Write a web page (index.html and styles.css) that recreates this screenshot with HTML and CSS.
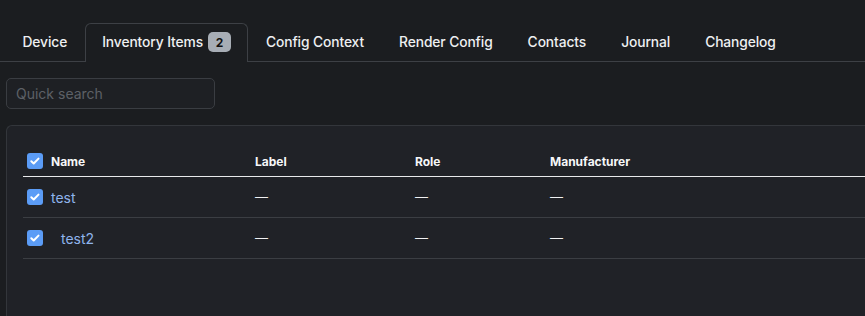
FILE: index.html
```html
<!DOCTYPE html>
<html>
<head>
<meta charset="utf-8">
<link rel="stylesheet" href="styles.css">
</head>
<body>
<div class="page">
  <ul class="tabs">
    <li class="tab">Device</li>
    <li class="tab active">Inventory Items <span class="badge">2</span></li>
    <li class="tab">Config Context</li>
    <li class="tab">Render Config</li>
    <li class="tab">Contacts</li>
    <li class="tab">Journal</li>
    <li class="tab">Changelog</li>
  </ul>
  <div class="search-row">
    <input class="search" type="text" placeholder="Quick search">
  </div>
  <div class="card">
    <table class="table">
      <thead>
        <tr>
          <th class="col-name"><span class="cell-check"><span class="check"><svg viewBox="0 0 16 16"><path d="M4.3 8.2l2.4 2.3 4.8-4.9" /></svg></span>Name</span></th>
          <th class="col-label">Label</th>
          <th class="col-role">Role</th>
          <th>Manufacturer</th>
        </tr>
      </thead>
      <tbody>
        <tr>
          <td><span class="cell-check"><span class="check"><svg viewBox="0 0 16 16"><path d="M4.3 8.2l2.4 2.3 4.8-4.9" /></svg></span><a class="link">test</a></span></td>
          <td>—</td>
          <td>—</td>
          <td>—</td>
        </tr>
        <tr>
          <td><span class="cell-check"><span class="check"><svg viewBox="0 0 16 16"><path d="M4.3 8.2l2.4 2.3 4.8-4.9" /></svg></span><a class="link indent">test2</a></span></td>
          <td>—</td>
          <td>—</td>
          <td>—</td>
        </tr>
      </tbody>
    </table>
  </div>
</div>
</body>
</html>
```
FILE: styles.css
```css
html, body {
  margin: 0;
  padding: 0;
  background: #1b1d20;
  color: #f2f3f5;
  font-family: Inter, "Noto Sans", sans-serif;
  overflow: hidden;
}
.page {
  padding-top: 23px;
}
.tabs {
  list-style: none;
  margin: 0;
  padding: 0 0 0 5px;
  display: flex;
  border-bottom: 1px solid #3d4045;
  height: 38px;
}
.tab {
  display: flex;
  align-items: center;
  gap: 5px;
  padding: 0 16.5px 1px;
  height: 38px;
  border: 1px solid transparent;
  border-bottom: none;
  border-radius: 6px 6px 0 0;
  font-size: 13.8px;
  font-weight: 500;
  color: #eef0f2;
  letter-spacing: -0.1px;
  box-sizing: border-box;
  white-space: nowrap;
}
.tab.active {
  border-color: #3d4045;
  background: #1b1d20;
  height: 39px;
  margin-bottom: -1px;
  padding-top: 0;
  padding-bottom: 2px;
}
.badge {
  display: inline-flex;
  align-items: center;
  justify-content: center;
  width: 23px;
  height: 20px;
  border-radius: 5px;
  background: #a7adb5;
  color: #111;
  font-size: 12px;
  font-weight: 700;
}
.search-row {
  padding: 16px 0 0 6px;
}
.search {
  display: block;
  width: 209px;
  height: 31px;
  box-sizing: border-box;
  background: #1e2024;
  border: 1px solid #3a3d42;
  border-radius: 5px;
  color: #ddd;
  font-family: inherit;
  font-size: 14px;
  padding: 0 9px;
  outline: none;
}
.search::placeholder {
  color: #5d6167;
}
.card {
  margin: 16px 0 0 6px;
  background: #202227;
  border: 1px solid #33363b;
  border-right: none;
  border-radius: 6px 0 0 0;
  padding: 16px 0 60px 16px;
}
.table {
  width: 100%;
  border-collapse: collapse;
  font-size: 13px;
}
.table th {
  text-align: left;
  font-weight: 700;
  font-size: 12px;
  color: #f6f7f8;
  padding: 11px 4px 7px;
  border-bottom: 1px solid #e8e9eb;
}
.table td {
  padding: 0 4px;
  height: 40px;
  border-bottom: 1px solid #3b3e43;
  color: #f0f1f3;
}
.col-name { width: 220px; }
.col-label { width: 152px; }
.col-role { width: 127px; }
.cell-check {
  display: flex;
  align-items: center;
  gap: 8px;
}
.check {
  display: inline-flex;
  width: 16px;
  height: 16px;
  border-radius: 3px;
  background: #5b9cf6;
}
.check svg {
  width: 16px;
  height: 16px;
  fill: none;
  stroke: #fff;
  stroke-width: 2;
  stroke-linecap: round;
  stroke-linejoin: round;
}
.link {
  color: #8fb4ec;
  font-size: 14px;
}
.indent {
  padding-left: 10px;
}
```
